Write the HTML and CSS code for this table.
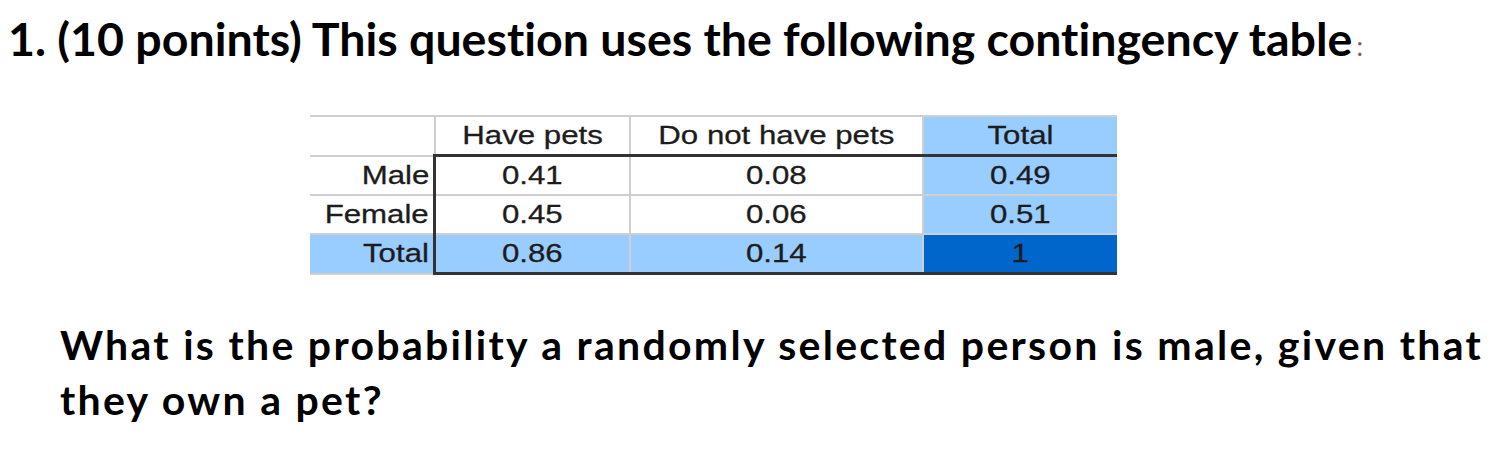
FILE: index.html
```html
<!DOCTYPE html>
<html>
<head>
<meta charset="utf-8">
<link rel="stylesheet" href="styles.css">
</head>
<body>
<div class="page">
  <h1 class="title">1. (10 ponints) This question uses the following contingency table<span class="colon">:</span></h1>
  <div class="table-wrap">
    <table class="ct">
      <tr class="head">
        <td class="lbl"></td>
        <td class="c1 white"><span class="t">Have pets</span></td>
        <td class="c2 white"><span class="t">Do not have pets</span></td>
        <td class="c3 light"><span class="t">Total</span></td>
      </tr>
      <tr>
        <td class="lbl"><span class="t r">Male</span></td>
        <td class="c1 white box-l"><span class="t">0.41</span></td>
        <td class="c2 white"><span class="t">0.08</span></td>
        <td class="c3 light"><span class="t">0.49</span></td>
      </tr>
      <tr>
        <td class="lbl"><span class="t r">Female</span></td>
        <td class="c1 white box-l"><span class="t">0.45</span></td>
        <td class="c2 white"><span class="t">0.06</span></td>
        <td class="c3 light"><span class="t">0.51</span></td>
      </tr>
      <tr class="tot">
        <td class="lbl light"><span class="t r">Total</span></td>
        <td class="c1 light box-l"><span class="t">0.86</span></td>
        <td class="c2 light"><span class="t">0.14</span></td>
        <td class="c3 dark"><span class="t">1</span></td>
      </tr>
    </table>
  </div>
  <p class="question">What is the probability a randomly selected person is male, given that they own a pet?</p>
</div>
</body>
</html>
```

FILE: styles.css
```css
html, body {
  margin: 0;
  padding: 0;
  background: #ffffff;
}

body {
  color: #000000;
  font-family: Lato, "Noto Sans", sans-serif;
  font-variant-ligatures: none;
}

.page {
  padding: 8px 0 0 8px;
}

.title {
  margin: 0;
  font-size: 46.5px;
  font-weight: 700;
  line-height: 60px;
  white-space: nowrap;
}

.colon {
  font-weight: 400;
  font-size: 26px;
  color: #666666;
  margin-left: 4px;
}

.table-wrap {
  margin: 39px 0 0 302px;
}

.ct {
  border-collapse: collapse;
  font-family: "Liberation Sans", Arial, sans-serif;
  font-size: 26px;
  color: #1c1c1c;
  -webkit-text-stroke: 0.3px #1c1c1c;
}

.ct td {
  height: 37px;
  padding: 0;
  text-align: center;
  vertical-align: middle;
  line-height: 27px;
  border-top: 2px solid #cfcfcf;
  border-bottom: 2px solid #cfcfcf;
  border-left: 2px solid #cfcfcf;
}

.ct .lbl {
  width: 119px;
  text-align: right;
  padding-right: 4px;
  border-left: none;
}

.ct .c1 { width: 193px; }
.ct .c2 { width: 291px; }
.ct .c3 { width: 193px; }

.ct .head td:not(.lbl) {
  border-bottom: 3px solid #333333;
}

.ct .box-l {
  border-left: 3px solid #333333;
}

.ct .tot td:not(.lbl) {
  border-bottom: 3px solid #333333;
}

.white { background: #ffffff; }
.light { background: #99ccff; }
.dark { background: #0066cc; }

.t {
  display: inline-block;
  transform: scaleX(1.2);
  transform-origin: center;
}

.t.r {
  transform-origin: right center;
}

.question {
  margin: 42px 0 0 52px;
  font-size: 41px;
  font-weight: 700;
  letter-spacing: 2.3px;
  line-height: 55px;
}
```
